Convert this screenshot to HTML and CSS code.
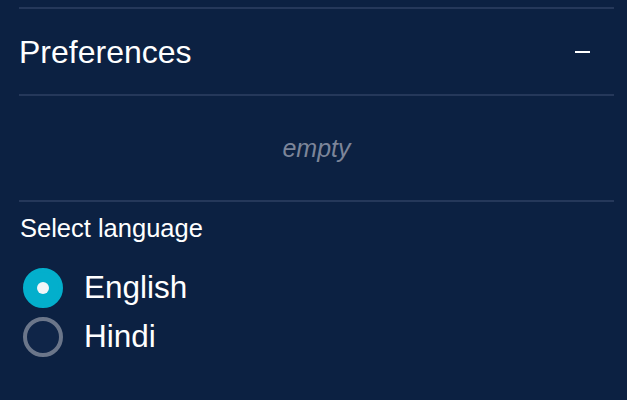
FILE: index.html
```html
<!DOCTYPE html>
<html>
<head>
<meta charset="utf-8">
<link rel="stylesheet" href="styles.css">
</head>
<body>
<div class="panel">
  <div class="rule"></div>
  <div class="header">
    <span class="title">Preferences</span>
    <span class="toggle" aria-label="collapse"></span>
  </div>
  <div class="rule"></div>
  <div class="empty"><span>empty</span></div>
  <div class="rule"></div>
  <div class="lang">
    <div class="label">Select language</div>
    <label class="option">
      <span class="radio checked"></span>
      <span class="opt-text">English</span>
    </label>
    <label class="option">
      <span class="radio"></span>
      <span class="opt-text">Hindi</span>
    </label>
  </div>
</div>
</body>
</html>
```
FILE: styles.css
```css
html, body {
  margin: 0;
  padding: 0;
  background: #0c2142;
  font-family: "Liberation Sans", Arial, sans-serif;
  color: #ffffff;
}
.panel {
  width: 595px;
  margin-left: 19px;
  padding-top: 7px;
}
.rule {
  height: 2px;
  background: #25385a;
}
.header {
  height: 85px;
  display: flex;
  align-items: center;
  justify-content: space-between;
}
.title {
  font-size: 32px;
  line-height: 1;
  margin-left: 0;
}
.toggle {
  width: 15px;
  height: 2px;
  background: #ffffff;
  margin-right: 24px;
}
.empty {
  height: 104px;
  display: flex;
  align-items: center;
  justify-content: center;
}
.empty span {
  font-style: italic;
  font-size: 25px;
  color: #7c8599;
  margin-top: 0;
}
.lang {
  padding-top: 12px;
}
.label {
  font-size: 25.5px;
  line-height: 29px;
  margin-left: 1px;
}
.option {
  display: flex;
  align-items: center;
  height: 49px;
}
.option:first-of-type {
  margin-top: 20px;
}
.radio {
  box-sizing: border-box;
  width: 40px;
  height: 40px;
  border-radius: 50%;
  margin-left: 4px;
  border: 4px solid #6b768a;
  background: #0f2548;
  display: flex;
  align-items: center;
  justify-content: center;
}
.radio.checked {
  border-color: #03afcc;
  background: #03afcc;
}
.radio.checked::after {
  content: "";
  width: 12px;
  height: 12px;
  border-radius: 50%;
  background: #f2f5f8;
}
.opt-text {
  font-size: 31.5px;
  margin-left: 21px;
}
```
